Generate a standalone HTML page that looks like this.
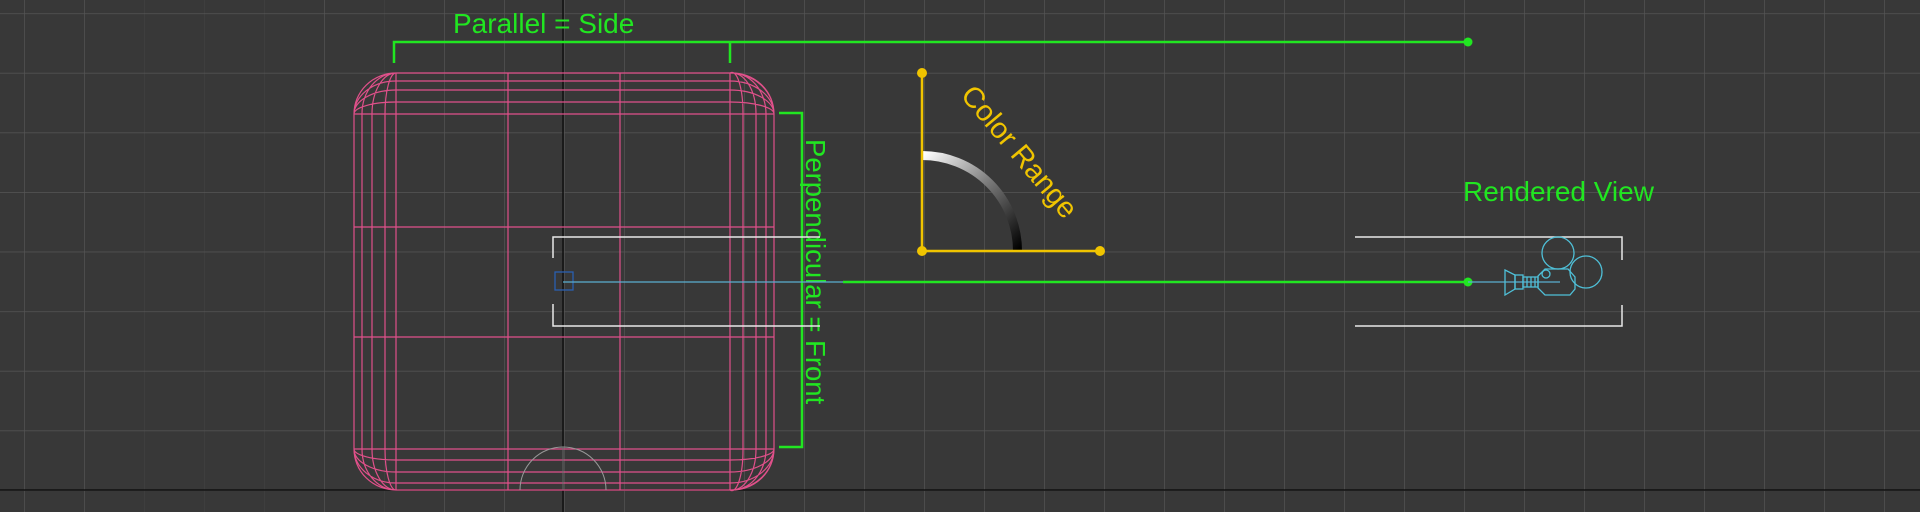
<!DOCTYPE html>
<html><head><style>
html,body{margin:0;padding:0;background:#383838;overflow:hidden}
svg{display:block}
text{font-family:"Liberation Sans",Arial,sans-serif}
</style></head><body>
<svg id="s" width="1920" height="512" viewBox="0 0 1920 512" xmlns="http://www.w3.org/2000/svg">
<defs>
<pattern id="g" x="564" y="490" width="60" height="59.6" patternUnits="userSpaceOnUse">
<path d="M0 0H60M0 0V59.6" stroke="#555" stroke-width="1.4" fill="none"/>
</pattern>
<linearGradient id="arcg" x1="0" y1="0" x2="1" y2="1">
<stop offset="0" stop-color="#ffffff"/><stop offset="0.5" stop-color="#777"/><stop offset="1" stop-color="#000"/>
</linearGradient>
</defs>
<rect width="1920" height="512" fill="#383838"/>
<rect width="1920" height="512" fill="url(#g)"/>
<line x1="563" y1="0" x2="563" y2="512" stroke="#111" stroke-width="1.5"/>
<line x1="0" y1="490" x2="1920" y2="490" stroke="#111" stroke-width="1.5"/>

<g id="pink" stroke="#e0508a" stroke-width="1.2" fill="none">
<path d="M396 73V490M508 73V490M620 73V490M730 73V490"/>
<path d="M354 227H774M354 337H774"/>
</g>
<path d="M520 490A43 43 0 0 1 606 490" stroke="#999" stroke-width="1" fill="none"/>
<line x1="563" y1="447" x2="563" y2="490" stroke="#777" stroke-width="1"/>

<g stroke="#21e621" stroke-width="2.5" fill="none">
<path d="M394 63V42H1468M730 42V63"/>
<path d="M779 113H802V447H779"/>
<path d="M843 282H1468"/>
</g>
<circle cx="1468" cy="42" r="4.5" fill="#21e621"/>
<circle cx="1468" cy="282" r="4.5" fill="#21e621"/>
<text x="453" y="33" font-size="28" fill="#21e621">Parallel = Side</text>
<text transform="translate(806,139) rotate(90)" font-size="27.5" fill="#21e621">Perpendicular = Front</text>
<text x="1463" y="201" font-size="28" fill="#21e621">Rendered View</text>

<g stroke="#e8e8e8" stroke-width="1.5" fill="none">
<path d="M553 258V237H820M553 304V326H820"/>
<path d="M1355 237H1622V260M1355 326H1622V305"/>
</g>
<rect x="555" y="272" width="18" height="18" fill="none" stroke="#2a5fb0" stroke-width="1.3"/>
<line x1="563" y1="282" x2="843" y2="282" stroke="#5aaed0" stroke-width="1.3"/>
<line x1="1468" y1="282" x2="1560" y2="282" stroke="#5aaed0" stroke-width="1.3"/>

<path d="M922 155.5A95.5 95.5 0 0 1 1017.5 251" stroke="url(#arcg)" stroke-width="9" fill="none"/>
<g stroke="#f0c400" stroke-width="2.5" fill="none"><path d="M922 73V251H1100"/></g>
<circle cx="922" cy="73" r="5" fill="#f0c400"/>
<circle cx="922" cy="251" r="5" fill="#f0c400"/>
<circle cx="1100" cy="251" r="5" fill="#f0c400"/>
<text transform="translate(1012,158) rotate(50)" text-anchor="middle" font-size="29" fill="#f0c400">Color Range</text>

<g stroke="#4fc0d8" stroke-width="1.3" fill="none">
<circle cx="1558" cy="253" r="16"/>
<circle cx="1586" cy="272" r="16"/>
<path d="M1545 269H1568L1575 277L1575 289L1570 295H1545L1538 288V276Z"/>
<path d="M1505 270L1515 275V289L1505 295Z"/>
<rect x="1515" y="275" width="8" height="14"/>
<rect x="1523" y="277" width="15" height="10"/>
<path d="M1527 277V287M1531 277V287M1535 277V287"/>
<circle cx="1546" cy="274" r="4"/>
</g>
</svg>
<script>
(function(){
var g=document.getElementById('pink');var d='';
var L=354,R=774,T=73,B=490,cxL=396,cxR=730,cyT=114,cyB=449;
// vertical meridians
[354,362,372,385].forEach(function(x){
 var rx=cxL-x; var xr=L+R-x;
 d+='M'+cxL+' '+T+'A'+rx+' '+(cyT-T)+' 0 0 0 '+x+' '+cyT+'V'+cyB+'A'+rx+' '+(B-cyB)+' 0 0 0 '+cxL+' '+B;
 d+='M'+cxR+' '+T+'A'+rx+' '+(cyT-T)+' 0 0 1 '+xr+' '+cyT+'V'+cyB+'A'+rx+' '+(B-cyB)+' 0 0 1 '+cxR+' '+B;
});
// horizontal parallels
[73,81,90,102].forEach(function(y){
 var ry=cyT-y;
 d+='M'+L+' '+cyT+'A'+(cxL-L)+' '+ry+' 0 0 1 '+cxL+' '+y+'H'+cxR+'A'+(R-cxR)+' '+ry+' 0 0 1 '+R+' '+cyT;
});
[490,483,472,460].forEach(function(y){
 var ry=y-cyB;
 d+='M'+L+' '+cyB+'A'+(cxL-L)+' '+ry+' 0 0 0 '+cxL+' '+y+'H'+cxR+'A'+(R-cxR)+' '+ry+' 0 0 0 '+R+' '+cyB;
});
d+='M'+L+' '+cyT+'H'+R+'M'+L+' '+cyB+'H'+R;
var p=document.createElementNS('http://www.w3.org/2000/svg','path');p.setAttribute('d',d);g.appendChild(p);
})();
</script>
</body></html>
